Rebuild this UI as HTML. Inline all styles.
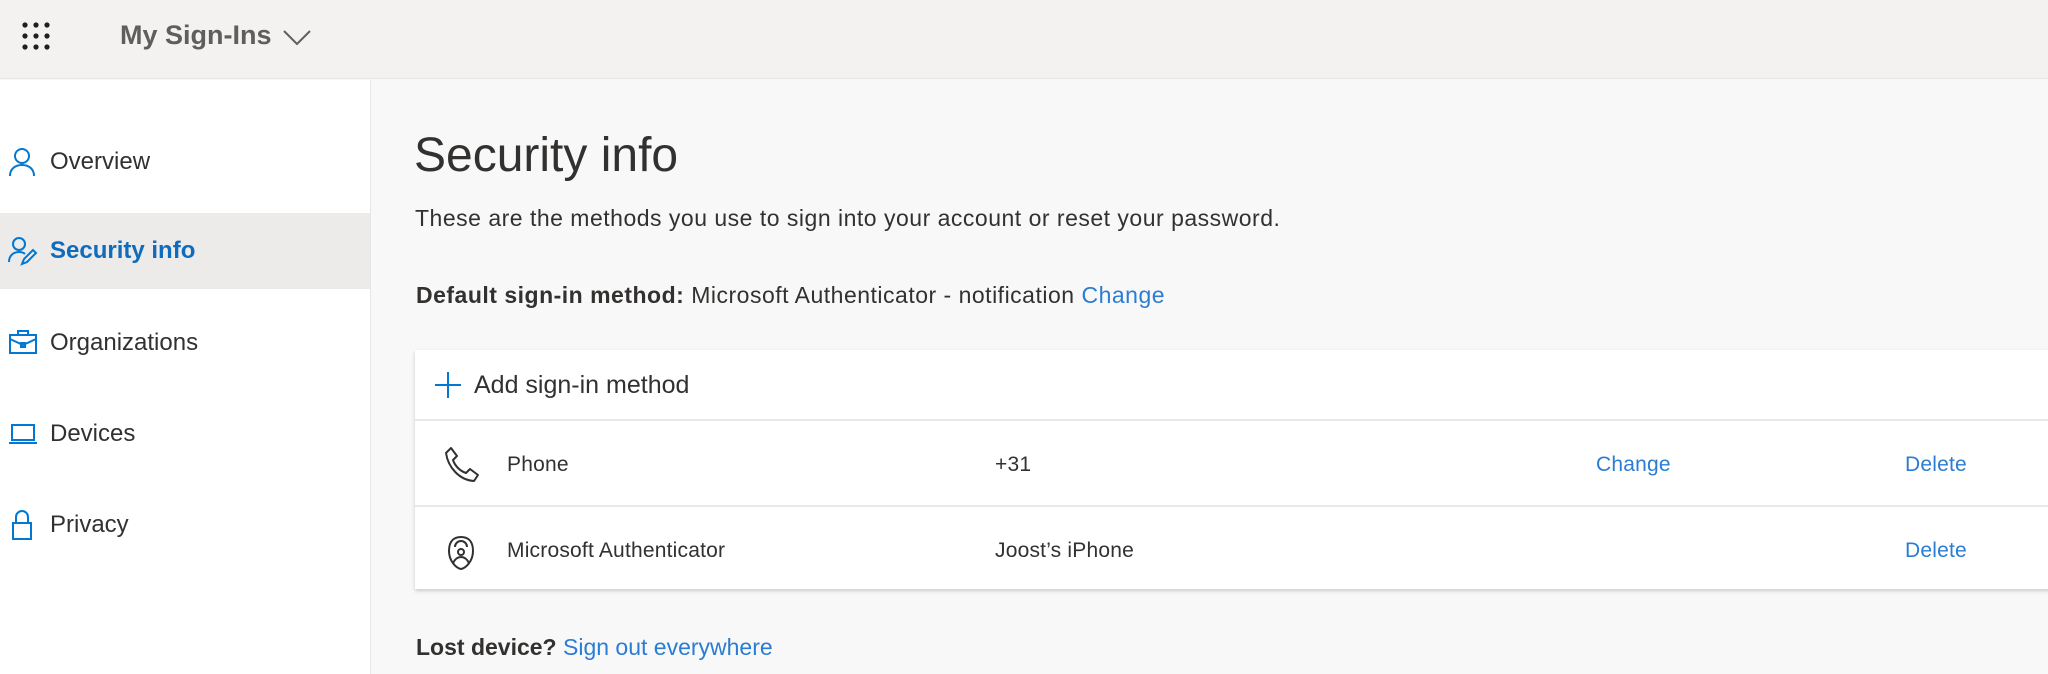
<!DOCTYPE html>
<html><head><meta charset="utf-8"><style>
*{margin:0;padding:0;box-sizing:border-box}
body{width:2048px;height:674px;overflow:hidden;background:#f8f8f8;font-family:"Liberation Sans",sans-serif;color:#323130;position:relative}
.hdr{position:absolute;left:0;top:0;width:2048px;height:79px;background:#f3f2f1;border-bottom:1px solid #e8e6e4}
.side{position:absolute;left:0;top:80px;width:371px;height:594px;background:#fff;border-right:1px solid #e6e6e6}
.nav{position:absolute;left:0;width:370px;height:76px;display:flex;align-items:center;font-size:24px;color:#323130}
.nav svg{position:absolute;left:8px}
.nav span{position:absolute;left:50px}
.a{position:absolute;white-space:nowrap}
.link{color:#2b7cd3}
.card{position:absolute;left:415px;top:350px;width:1640px;height:239px;background:#fff;box-shadow:0 2px 4px rgba(0,0,0,.18)}
.sep{position:absolute;left:0;width:100%;height:2px;background:#e9e9e9}
.r{font-size:21px;letter-spacing:0.2px}
</style></head><body>
<div class="hdr">
<svg style="position:absolute;left:22px;top:22px" width="28" height="28" viewBox="0 0 28 28" fill="#201f1e"><circle cx="3" cy="3" r="2.6"/><circle cx="14" cy="3" r="2.6"/><circle cx="25" cy="3" r="2.6"/><circle cx="3" cy="14" r="2.6"/><circle cx="14" cy="14" r="2.6"/><circle cx="25" cy="14" r="2.6"/><circle cx="3" cy="25" r="2.6"/><circle cx="14" cy="25" r="2.6"/><circle cx="25" cy="25" r="2.6"/></svg>
<div class="a" style="left:120px;top:20px;font-size:27px;font-weight:bold;color:#605e5c">My Sign-Ins</div>
<svg style="position:absolute;left:283px;top:30px" width="28" height="16" viewBox="0 0 28 16"><path d="M1 1 L14 14 L27 1" fill="none" stroke="#605e5c" stroke-width="2"/></svg>
</div>
<div class="side">
<div class="nav" style="top:44px"><svg width="28" height="30" viewBox="0 0 28 30" fill="none" stroke="#0078d4" stroke-width="2"><circle cx="14" cy="9" r="7"/><path d="M2 29c0-7 5-11 12-11s12 4 12 11"/></svg><span>Overview</span></div>
<div class="nav" style="top:133px;background:#edebe9;color:#0f6cbd;font-weight:bold"><svg width="30" height="30" viewBox="0 0 30 30" fill="none" stroke="#0078d4" stroke-width="2"><circle cx="11" cy="8" r="6"/><path d="M1 26c0-6 4-10 10-10 3 0 5 1 6 2"/><path d="M14 28l2-5 9-9 3 3-9 9z"/></svg><span>Security info</span></div>
<div class="nav" style="top:225px"><svg width="30" height="28" viewBox="0 0 30 28" fill="none" stroke="#0078d4" stroke-width="2"><rect x="2" y="6" width="26" height="18"/><path d="M10 6V2h10v4M2 10l13 6 13-6"/><rect x="13" y="14" width="4" height="4"/></svg><span>Organizations</span></div>
<div class="nav" style="top:316px"><svg width="30" height="24" viewBox="0 0 30 24" fill="none" stroke="#0078d4" stroke-width="2"><rect x="4" y="3" width="22" height="15"/><path d="M1 21h28"/></svg><span>Devices</span></div>
<div class="nav" style="top:407px"><svg width="28" height="32" viewBox="0 0 28 32" fill="none" stroke="#0078d4" stroke-width="2"><rect x="5" y="14" width="18" height="16"/><path d="M8 14V8a6 6 0 0 1 12 0v6"/></svg><span>Privacy</span></div>
</div>
<div class="a" style="left:414px;top:128px;font-size:48px;color:#323130">Security info</div>
<div class="a" style="left:415px;top:205px;font-size:23px;letter-spacing:0.5px">These are the methods you use to sign into your account or reset your password.</div>
<div class="a" style="left:416px;top:282px;font-size:23px;letter-spacing:0.5px"><b>Default sign-in method:</b> Microsoft Authenticator - notification <span class="link">Change</span></div>
<div class="card">
<svg style="position:absolute;left:20px;top:22px" width="26" height="26" viewBox="0 0 26 26" stroke="#0078d4" stroke-width="2"><path d="M13 0v26M0 13h26"/></svg>
<div class="a" style="left:59px;top:21px;font-size:25px">Add sign-in method</div>
<div class="sep" style="top:69px"></div>
<svg style="position:absolute;left:29px;top:96px" width="38" height="38" viewBox="0 0 38 38" fill="none" stroke="#323130" stroke-width="2"><path d="M7 2l6 8-4 4c2 6 7 11 13 13l4-4 8 6-4 6C15 34 4 21 2 7z" stroke-linejoin="round"/></svg>
<div class="a r" style="left:92px;top:103px">Phone</div>
<div class="a r" style="left:580px;top:103px">+31</div>
<div class="a r link" style="left:1181px;top:103px">Change</div>
<div class="a r link" style="left:1490px;top:103px">Delete</div>
<div class="sep" style="top:155px"></div>
<svg style="position:absolute;left:32px;top:185px" width="28" height="36" viewBox="0 0 28 36" fill="none" stroke="#323130" stroke-width="2"><path d="M14 2C20 2 26 5 26 16c0 10-7 17-12 18C9 33 2 26 2 16 2 5 8 2 14 2z"/><path d="M8 12a6 6 0 0 1 12 0"/><circle cx="14" cy="17" r="3"/><path d="M6 28c2-4 5-6 8-6s6 2 8 6"/></svg>
<div class="a r" style="left:92px;top:189px">Microsoft Authenticator</div>
<div class="a r" style="left:580px;top:189px">Joost’s iPhone</div>
<div class="a r link" style="left:1490px;top:189px">Delete</div>
</div>
<div class="a" style="left:416px;top:634px;font-size:23px"><b>Lost device?</b> <span class="link">Sign out everywhere</span></div>
</body></html>
